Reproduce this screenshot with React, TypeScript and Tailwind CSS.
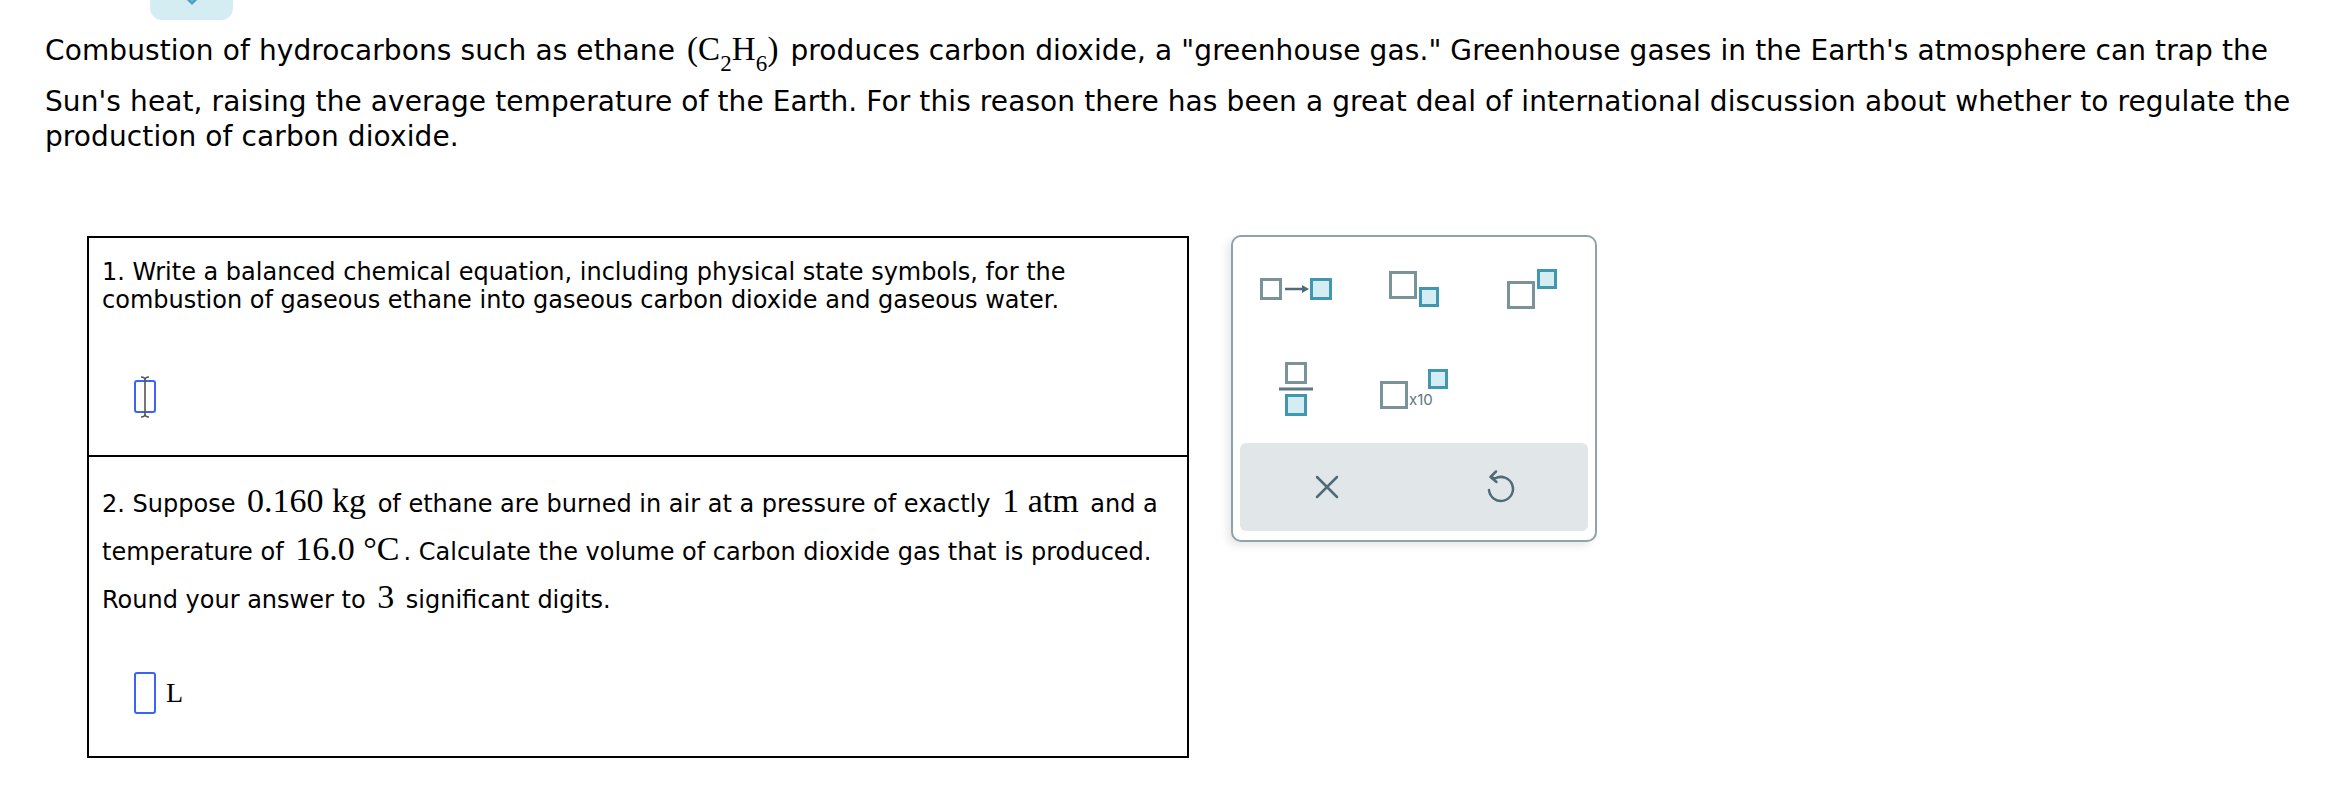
import type { ReactNode } from "react";

const GRAY = "#7a939b";
const TEAL = "#3f98b0";
const FILL = "#d4edf3";
const INK = "#4e6b76";

const serif = "font-['Liberation_Serif',serif]";

// square used by the keypad icons, x/y/s are the outer edges
const Sq = ({ x, y, s, on }: { x: number; y: number; s: number; on?: boolean }) => (
  <rect
    x={x + 1.5}
    y={y + 1.5}
    width={s - 3}
    height={s - 3}
    fill={on ? FILL : "white"}
    stroke={on ? TEAL : GRAY}
    strokeWidth={3}
  />
);

const Key = ({ children }: { children: ReactNode }) => (
  <div className="flex h-[100px] items-center justify-center cursor-pointer">{children}</div>
);

const Math = ({ children }: { children: ReactNode }) => (
  <span className={`${serif} mx-[4px] text-[34px] leading-none`}>{children}</span>
);

export default function App() {
  return (
    <div className="min-h-screen bg-white font-['DejaVu_Sans',Verdana,sans-serif] text-black">
      <div className="ml-[150px] flex h-[20px] w-[83px] justify-center rounded-b-[12px] bg-[#d4edf3]">
        <svg width="14" height="6" viewBox="0 0 14 6">
          <path d="M1 -3 L7 3 L13 -3" stroke="#4ba3c6" strokeWidth="3" fill="none" />
        </svg>
      </div>

      <p className="ml-[45px] mt-[12px] whitespace-nowrap text-[28px] leading-[35px] tracking-[0.1px]">
        Combustion of hydrocarbons such as ethane{" "}
        <span className={`${serif} mx-[3px] text-[33px]`}>
          (C<span className="text-[23px] leading-[41px] align-[-11px]">2</span>H
          <span className="text-[23px] leading-[41px] align-[-11px]">6</span>)
        </span>{" "}
        produces carbon dioxide, a "greenhouse gas." Greenhouse gases in the Earth's atmosphere can trap the
        <br />
        Sun's heat, raising the average temperature of the Earth. For this reason there has been a great deal of
        international discussion about whether to regulate the
        <br />
        production of carbon dioxide.
      </p>

      <div className="ml-[87px] mt-[82px] flex items-start gap-[42px]">
        <div className="w-[1102px] border-2 border-black">
          <div className="h-[219px] border-b-2 border-black pl-[13px] pt-[20px]">
            <p className="whitespace-nowrap text-[24px] leading-[28px]">
              1. Write a balanced chemical equation, including physical state symbols, for the
              <br />
              combustion of gaseous ethane into gaseous carbon dioxide and gaseous water.
            </p>
            <div className="relative ml-[32px] mt-[62px] h-[42px] w-[22px]">
              <div className="absolute left-0 top-[4px] h-[33px] w-[22px] rounded-[3px] border-2 border-[#3b64f6]" />
              <svg className="absolute left-[5px] top-0" width="12" height="42" viewBox="0 0 12 42">
                <path
                  d="M2 1 Q6 1 6 4 Q6 1 10 1 M6 4 L6 38 M2 41 Q6 41 6 38 Q6 41 10 41"
                  stroke="#555"
                  strokeWidth="1.6"
                  fill="none"
                />
              </svg>
            </div>
          </div>

          <div className="h-[299px] pl-[13px] pt-[23px]">
            <p className="whitespace-nowrap text-[24px] leading-[48px]">
              2. Suppose <Math>0.160 kg</Math> of ethane are burned in air at a pressure of exactly{" "}
              <Math>1 atm</Math> and a
              <br />
              temperature of <Math>16.0 °C</Math>. Calculate the volume of carbon dioxide gas that is produced.
              <br />
              Round your answer to <Math>3</Math> significant digits.
            </p>
            <div className="ml-[32px] mt-[48px] flex items-center gap-[10px]">
              <div className="h-[42px] w-[22px] rounded-[3px] border-2 border-[#3b64f6]" />
              <span className={`${serif} text-[28px] leading-none`}>L</span>
            </div>
          </div>
        </div>

        <div className="-mt-px flex h-[307px] w-[366px] flex-col rounded-[10px] border-2 border-[#8ea3aa] bg-white shadow-[-4px_4px_8px_rgba(0,0,0,0.09)]">
          <div className="grid grid-cols-3 px-[4px] pt-[2px]">
            <Key>
              <svg width="75" height="24" viewBox="0 0 75 24">
                <Sq x={1} y={1} s={22} />
                <path d="M26 12 L44 12" stroke={INK} strokeWidth="2.5" />
                <polygon points="43,8 50,12 43,16" fill={INK} />
                <Sq x={51} y={1} s={22} on />
              </svg>
            </Key>
            <Key>
              <svg width="53" height="39" viewBox="0 0 53 39">
                <Sq x={1} y={1} s={28} />
                <Sq x={31} y={17} s={20} on />
              </svg>
            </Key>
            <Key>
              <svg width="53" height="43" viewBox="0 0 53 43">
                <Sq x={1} y={13} s={28} />
                <Sq x={31} y={1} s={20} on />
              </svg>
            </Key>
            <Key>
              <svg width="36" height="57" viewBox="0 0 36 57">
                <Sq x={7} y={1} s={22} />
                <path d="M1 28 L35 28" stroke="#5f7982" strokeWidth="3" />
                <Sq x={7} y={33} s={22} on />
              </svg>
            </Key>
            <Key>
              <svg width="70" height="42" viewBox="0 0 70 42">
                <Sq x={1} y={13} s={28} />
                <text x="30" y="37" fontSize="15" fill="#5b7580" fontFamily="Inter, sans-serif">
                  x10
                </text>
                <Sq x={49} y={1} s={20} on />
              </svg>
            </Key>
            <div />
          </div>

          <div className="mx-[7px] mt-[4px] grid h-[88px] grid-cols-2 rounded-[6px] bg-[#e1e6e9]">
            <div className="flex items-center justify-center cursor-pointer">
              <svg width="24" height="24" viewBox="0 0 24 24">
                <path d="M2 2 L22 22 M22 2 L2 22" stroke={INK} strokeWidth="2.5" strokeLinecap="round" />
              </svg>
            </div>
            <div className="flex items-center justify-center cursor-pointer">
              <svg width="30" height="36" viewBox="0 0 30 36">
                <path
                  d="M10 2.5 L4.5 8 L10.5 13 M4.5 8 L9 9.5 A12 12 0 1 1 3 21"
                  stroke={INK}
                  strokeWidth="2.5"
                  fill="none"
                  strokeLinecap="round"
                  strokeLinejoin="round"
                />
              </svg>
            </div>
          </div>
        </div>
      </div>
    </div>
  );
}
